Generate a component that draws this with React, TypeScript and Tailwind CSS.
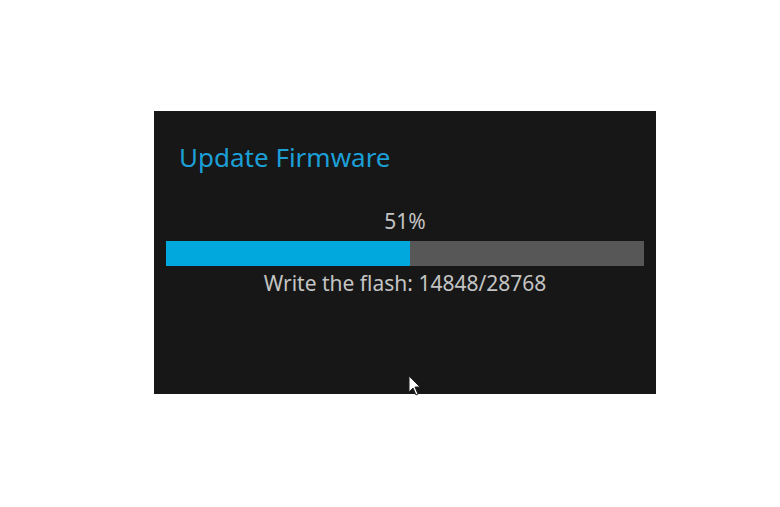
export default function App() {
  const percent = 51;
  return (
    <div className="min-h-screen bg-white pt-[111px] pl-[154px]" style={{ fontFamily: '"Noto Sans", "Open Sans", sans-serif' }}>
      <div className="relative w-[502px] h-[283px] bg-[#171717] px-3">
        <h1 className="pl-[13px] pt-[29px] text-[26px] leading-[34px] text-[#1c9fd6]">Update Firmware</h1>
        <p className="mt-[34px] text-center text-[21px] leading-[26px] text-[#c4c4c4]">{percent}%</p>
        <div className="mt-[7px] h-[25px] w-full bg-[#575757]">
          <div className="h-full bg-[#00a8de]" style={{ width: `${percent}%` }} />
        </div>
        <p className="mt-[4px] text-center text-[21px] leading-[26px] text-[#c4c4c4]">Write the flash: 14848/28768</p>

        {/* mouse cursor */}
        <svg className="absolute left-[254px] top-[264px]" width="14" height="22" viewBox="0 0 14 22">
          <path d="M1 1 L1 17 L5 13 L8 20 L10 19 L7 12 L12 12 Z" fill="#fff" stroke="#222" strokeWidth="1" />
        </svg>
      </div>
    </div>
  );
}
